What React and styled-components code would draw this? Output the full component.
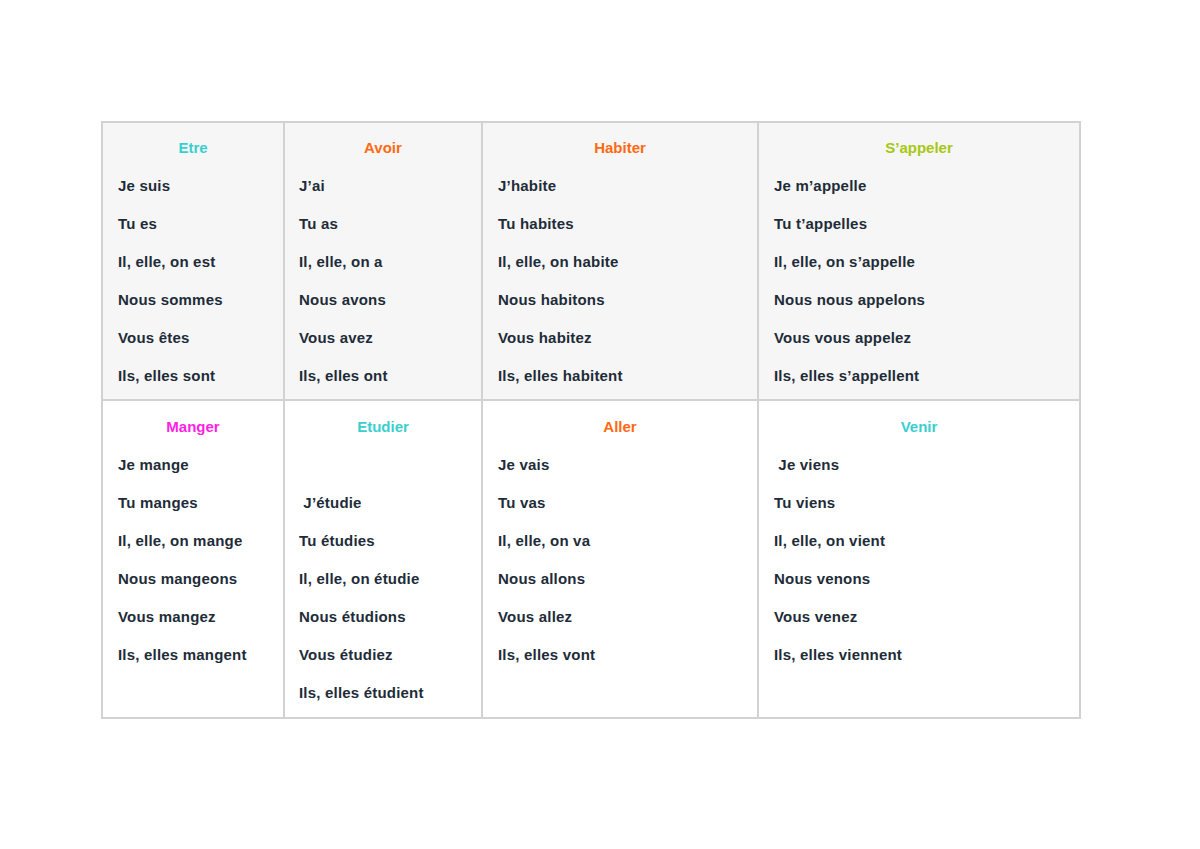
import React from "react";
import styled, { createGlobalStyle } from "styled-components";

const Global = createGlobalStyle`
  html, body { margin: 0; padding: 0; background: #ffffff; }
  body { font-family: "Liberation Sans", Arial, sans-serif; }
`;

const Page = styled.div`
  width: 1200px;
  height: 849px;
  padding: 121px 0 0 101px;
  box-sizing: border-box;
`;

const Table = styled.div`
  display: grid;
  grid-template-columns: 180px 196px 274px 320px;
  gap: 2px;
  padding: 2px;
  width: max-content;
  background: #d2d2d2;
`;

const Cell = styled.div`
  background: ${(p) => (p.$shaded ? "#f6f6f6" : "#ffffff")};
  padding: ${(p) => (p.$shaded ? "6px 0 4px 0" : "7px 0 5px 0")};
  font-size: 15px;
  font-weight: bold;
  line-height: 38px;
  color: #1e2c39;
`;

const Title = styled.div`
  text-align: center;
  color: ${(p) => p.$color};
  height: 38px;
`;

const Line = styled.div`
  white-space: pre;
  padding-left: ${(p) => p.$indent}px;
  letter-spacing: 0.2px;
  height: 38px;
`;

const CYAN = "#3acfcf";
const ORANGE = "#ff6a13";
const LIME = "#a6c814";
const MAGENTA = "#ff22e6";

const rows = [
  [
    { title: "Etre", color: CYAN, indent: 15, lines: ["Je suis", "Tu es", "Il, elle, on est", "Nous sommes", "Vous êtes", "Ils, elles sont"] },
    { title: "Avoir", color: ORANGE, indent: 14, lines: ["J’ai", "Tu as", "Il, elle, on a", "Nous avons", "Vous avez", "Ils, elles ont"] },
    { title: "Habiter", color: ORANGE, indent: 15, lines: ["J’habite", "Tu habites", "Il, elle, on habite", "Nous habitons", "Vous habitez", "Ils, elles habitent"] },
    { title: "S’appeler", color: LIME, indent: 15, lines: ["Je m’appelle", "Tu t’appelles", "Il, elle, on s’appelle", "Nous nous appelons", "Vous vous appelez", "Ils, elles s’appellent"] },
  ],
  [
    { title: "Manger", color: MAGENTA, indent: 15, lines: ["Je mange", "Tu manges", "Il, elle, on mange", "Nous mangeons", "Vous mangez", "Ils, elles mangent"] },
    { title: "Etudier", color: CYAN, indent: 14, lines: ["", " J’étudie", "Tu étudies", "Il, elle, on étudie", "Nous étudions", "Vous étudiez", "Ils, elles étudient"] },
    { title: "Aller", color: ORANGE, indent: 15, lines: ["Je vais", "Tu vas", "Il, elle, on va", "Nous allons", "Vous allez", "Ils, elles vont"] },
    { title: "Venir", color: CYAN, indent: 15, lines: [" Je viens", "Tu viens", "Il, elle, on vient", "Nous venons", "Vous venez", "Ils, elles viennent"] },
  ],
];

export default function App() {
  return (
    <>
      <Global />
      <Page>
        <Table>
          {rows.map((row, ri) =>
            row.map((cell, ci) => (
              <Cell key={`${ri}-${ci}`} $shaded={ri === 0}>
                <Title $color={cell.color}>{cell.title}</Title>
                {cell.lines.map((l, li) => (
                  <Line key={li} $indent={cell.indent}>{l}</Line>
                ))}
              </Cell>
            ))
          )}
        </Table>
      </Page>
    </>
  );
}
